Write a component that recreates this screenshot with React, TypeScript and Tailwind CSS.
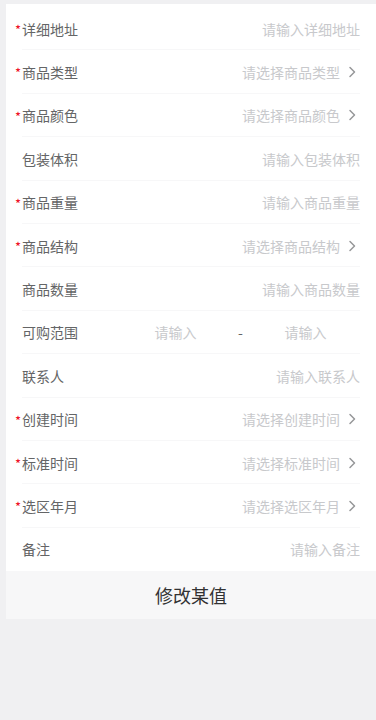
import React from "react";

type Row =
  | { kind: "input"; label: string; placeholder: string; required?: boolean }
  | { kind: "select"; label: string; placeholder: string; required?: boolean }
  | { kind: "range"; label: string };

const rows: Row[] = [
  { kind: "input", label: "详细地址", placeholder: "请输入详细地址", required: true },
  { kind: "select", label: "商品类型", placeholder: "请选择商品类型", required: true },
  { kind: "select", label: "商品颜色", placeholder: "请选择商品颜色", required: true },
  { kind: "input", label: "包装体积", placeholder: "请输入包装体积" },
  { kind: "input", label: "商品重量", placeholder: "请输入商品重量", required: true },
  { kind: "select", label: "商品结构", placeholder: "请选择商品结构", required: true },
  { kind: "input", label: "商品数量", placeholder: "请输入商品数量" },
  { kind: "range", label: "可购范围" },
  { kind: "input", label: "联系人", placeholder: "请输入联系人" },
  { kind: "select", label: "创建时间", placeholder: "请选择创建时间", required: true },
  { kind: "select", label: "标准时间", placeholder: "请选择标准时间", required: true },
  { kind: "select", label: "选区年月", placeholder: "请选择选区年月", required: true },
  { kind: "input", label: "备注", placeholder: "请输入备注" },
];

const Arrow = () => (
  <svg width="16" height="16" viewBox="0 0 16 16" className="ml-1 shrink-0">
    <polyline
      points="6,3.5 10.5,8 6,12.5"
      fill="none"
      stroke="#969799"
      strokeWidth="1.5"
      strokeLinecap="round"
      strokeLinejoin="round"
    />
  </svg>
);

const FieldRow: React.FC<{ row: Row; last: boolean }> = ({ row, last }) => {
  const required = row.kind !== "range" && row.required;
  return (
    <div className="relative flex h-[43.4px] items-center px-4 text-sm">
      {required && (
        <span className="absolute left-[9px] top-[16px] text-[13px] leading-none text-[#ee0a24]">*</span>
      )}
      <div className="w-[87px] shrink-0 text-[#646566]">{row.label}</div>
      {row.kind === "range" ? (
        <div className="ml-3 flex flex-1 items-center">
          <span className="flex-1 text-center text-[#c8c9cc]">请输入</span>
          <span className="px-2 text-[#646566]">-</span>
          <span className="flex-1 text-center text-[#c8c9cc]">请输入</span>
        </div>
      ) : (
        <div className="ml-3 flex flex-1 items-center justify-end">
          <span className="text-[#c8c9cc]">{row.placeholder}</span>
          {row.kind === "select" && <Arrow />}
        </div>
      )}
      {!last && <div className="absolute bottom-0 left-4 right-4 h-px bg-[#f7f7f8]" />}
    </div>
  );
};

export default function App() {
  return (
    <div
      className="min-h-[720px] bg-[#f0f0f2] pl-[6px] pt-1"
      style={{ fontFamily: '"Noto Sans CJK SC", "Noto Sans", sans-serif' }}
    >
      <div className="bg-white pt-[3px]">
        {rows.map((row, i) => (
          <FieldRow key={row.label} row={row} last={i === rows.length - 1} />
        ))}
      </div>
      <button className="flex h-[48px] w-full items-center justify-center bg-[#f7f7f8] text-[18px] text-[#323233]">
        修改某值
      </button>
    </div>
  );
}
